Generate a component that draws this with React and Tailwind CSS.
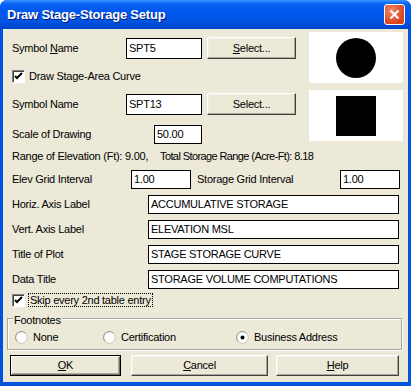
import React from 'react';

const face = 'bg-[#ece9d8]';

function Btn({ children, def, className = '' }) {
  if (def) {
    return (
      <div className={`border border-black ${className}`}>
        <div className={`h-full flex items-center justify-center ${face} border-t border-l border-white border-b border-r border-b-[#716f64] border-r-[#716f64] shadow-[inset_-1px_-1px_0_#aca899]`}>
          {children}
        </div>
      </div>
    );
  }
  return (
    <div className={`flex items-center justify-center ${face} border-t border-l border-white border-b border-r border-b-[#404040] border-r-[#404040] shadow-[inset_-1px_-1px_0_#aca899,inset_1px_1px_0_#f1efe2] ${className}`}>
      {children}
    </div>
  );
}

function Field({ value, className = '' }) {
  return (
    <div className={`bg-white border border-black flex items-center pl-[2px] text-black ${className}`}>
      {value}
    </div>
  );
}

function Check({ checked }) {
  return (
    <div className="w-[13px] h-[13px] bg-white border-t border-l border-[#808080] border-b border-r border-b-white border-r-white shadow-[inset_1px_1px_0_#404040] flex items-center justify-center shrink-0">
      {checked && (
        <svg width="9" height="9" viewBox="0 0 9 9">
          <path d="M1 4 L3 6 L8 1" stroke="#000" strokeWidth="2" fill="none" />
        </svg>
      )}
    </div>
  );
}

function Radio({ checked }) {
  return (
    <svg width="13" height="13" viewBox="0 0 13 13" className="shrink-0">
      <circle cx="6.5" cy="6.5" r="5.8" fill="#fff" stroke="#c8c4b4" strokeWidth="1" />
      <path d="M2.2 10.5 A5.6 5.6 0 0 1 10.5 2.2" stroke="#9a978a" fill="none" strokeWidth="1" />
      <circle cx="6.5" cy="6.5" r="4.6" fill="#fff" />
      {checked && <circle cx="6.5" cy="6.5" r="2" fill="#000" />}
    </svg>
  );
}

export default function App() {
  return (
    <div
      className="w-[411px] h-[386px] flex flex-col rounded-t-[7px] bg-[#0053e1] overflow-hidden text-[11px] tracking-[-0.25px] text-black"
      style={{ fontFamily: '"Liberation Sans", Arial, sans-serif' }}
    >
      {/* title bar */}
      <div className="h-[29px] shrink-0 flex items-center justify-between pl-[7px] pr-[6px] bg-[linear-gradient(180deg,#3d95ff_0%,#0a66f4_12%,#0058ee_35%,#0055e5_70%,#0045c7_100%)]">
        <span className="text-white font-bold text-[13px] [text-shadow:1px_1px_0_#0a1e7a] tracking-[-0.2px]">
          Draw Stage-Storage Setup
        </span>
        <div className="w-[21px] h-[21px] rounded-[3px] border border-white bg-[radial-gradient(circle_at_35%_30%,#f08a6c,#d9431c_70%)] flex items-center justify-center">
          <svg width="11" height="11" viewBox="0 0 11 11">
            <path d="M1.5 1.5 L9.5 9.5 M9.5 1.5 L1.5 9.5" stroke="#fff" strokeWidth="2" />
          </svg>
        </div>
      </div>

      {/* client area */}
      <div className={`flex-1 mx-[3px] mb-[4px] ${face} flex flex-col pl-[9px] pr-[5px] pt-[3px]`}>
        <div className="flex">
          <div className="flex flex-col w-[293px]">
            <div className="flex items-center mt-[5px] h-[22px]">
              <span className="w-[114px]">Symbol <u>N</u>ame</span>
              <Field value="SPT5" className="w-[76px] h-[21px]" />
              <Btn className="ml-[5px] w-[89px] h-[22px]"><span><u>S</u>elect...</span></Btn>
            </div>
            <div className="flex items-center gap-[4px] mt-[11px] h-[13px]">
              <Check checked />
              <span>Draw Stage-Area Curve</span>
            </div>
            <div className="flex items-center mt-[10px] h-[22px]">
              <span className="w-[114px]">Symbol Name</span>
              <Field value="SPT13" className="w-[76px] h-[21px]" />
              <Btn className="ml-[5px] w-[89px] h-[22px]"><span>Select...</span></Btn>
            </div>
            <div className="flex items-center mt-[10px] h-[19px]">
              <span className="w-[142px]">Scale of Drawing</span>
              <Field value="50.00" className="w-[48px] h-[19px]" />
            </div>
          </div>
          <div className="flex flex-col ml-[4px]">
            <div className="w-[94px] h-[51px] bg-white flex items-center justify-center">
              <div className="w-[40px] h-[40px] rounded-full bg-black" />
            </div>
            <div className="w-[94px] h-[51px] mt-[7px] bg-white flex items-start justify-center pt-[6px]">
              <div className="w-[40px] h-[40px] bg-black" />
            </div>
          </div>
        </div>

        <div className="mt-[6px] h-[13px] flex items-center whitespace-pre">
          <span className="w-[148px]">Range of Elevation (Ft): 9.00,</span>
          <span className="tracking-[-0.6px]">Total Storage Range (Acre-Ft): 8.18</span>
        </div>

        <div className="flex items-center mt-[7px] h-[19px]">
          <span className="w-[119px]">Elev Grid Interval</span>
          <Field value="1.00" className="w-[60px] h-[19px]" />
          <span className="ml-[6px] w-[143px]">Storage Grid Interval</span>
          <Field value="1.00" className="w-[60px] h-[19px]" />
        </div>

        <div className="flex flex-col gap-[6px] mt-[6px]">
          {[
            ['Horiz. Axis Label', 'ACCUMULATIVE STORAGE'],
            ['Vert. Axis Label', 'ELEVATION MSL'],
            ['Title of Plot', 'STAGE STORAGE CURVE'],
            ['Data Title', 'STORAGE VOLUME COMPUTATIONS'],
          ].map(([label, val]) => (
            <div key={label} className="flex items-center h-[19px]">
              <span className="w-[136px]">{label}</span>
              <Field value={val} className="w-[251px] h-[19px]" />
            </div>
          ))}
        </div>

        <div className="flex items-center gap-[3px] mt-[4px] h-[14px]">
          <Check checked />
          <span className="border border-dotted border-black px-[1px] leading-[12px]">Skip every 2nd table entry</span>
        </div>

        {/* footnotes group */}
        <div className="relative mt-[11px] -ml-[5px] w-[395px] h-[32px] border border-[#aca899] shadow-[1px_1px_0_#fff,inset_1px_1px_0_#fff] flex items-center pl-[7px] pt-[7px]">
          <span className={`absolute -top-[7px] left-[5px] px-[1px] ${face}`}>Footnotes</span>
          <div className="flex items-center gap-[5px] w-[88px]">
            <Radio />
            <span>None</span>
          </div>
          <div className="flex items-center gap-[5px] w-[133px]">
            <Radio />
            <span>Certification</span>
          </div>
          <div className="flex items-center gap-[5px]">
            <Radio checked />
            <span>Business Address</span>
          </div>
        </div>

        <div className="flex mt-[5px] -ml-[2px]">
          <Btn def className="w-[111px] h-[21px]"><span><u>O</u>K</span></Btn>
          <Btn className="ml-[10px] w-[137px] h-[21px]"><span><u>C</u>ancel</span></Btn>
          <Btn className="ml-[8px] w-[123px] h-[21px]"><span><u>H</u>elp</span></Btn>
        </div>
      </div>
    </div>
  );
}
